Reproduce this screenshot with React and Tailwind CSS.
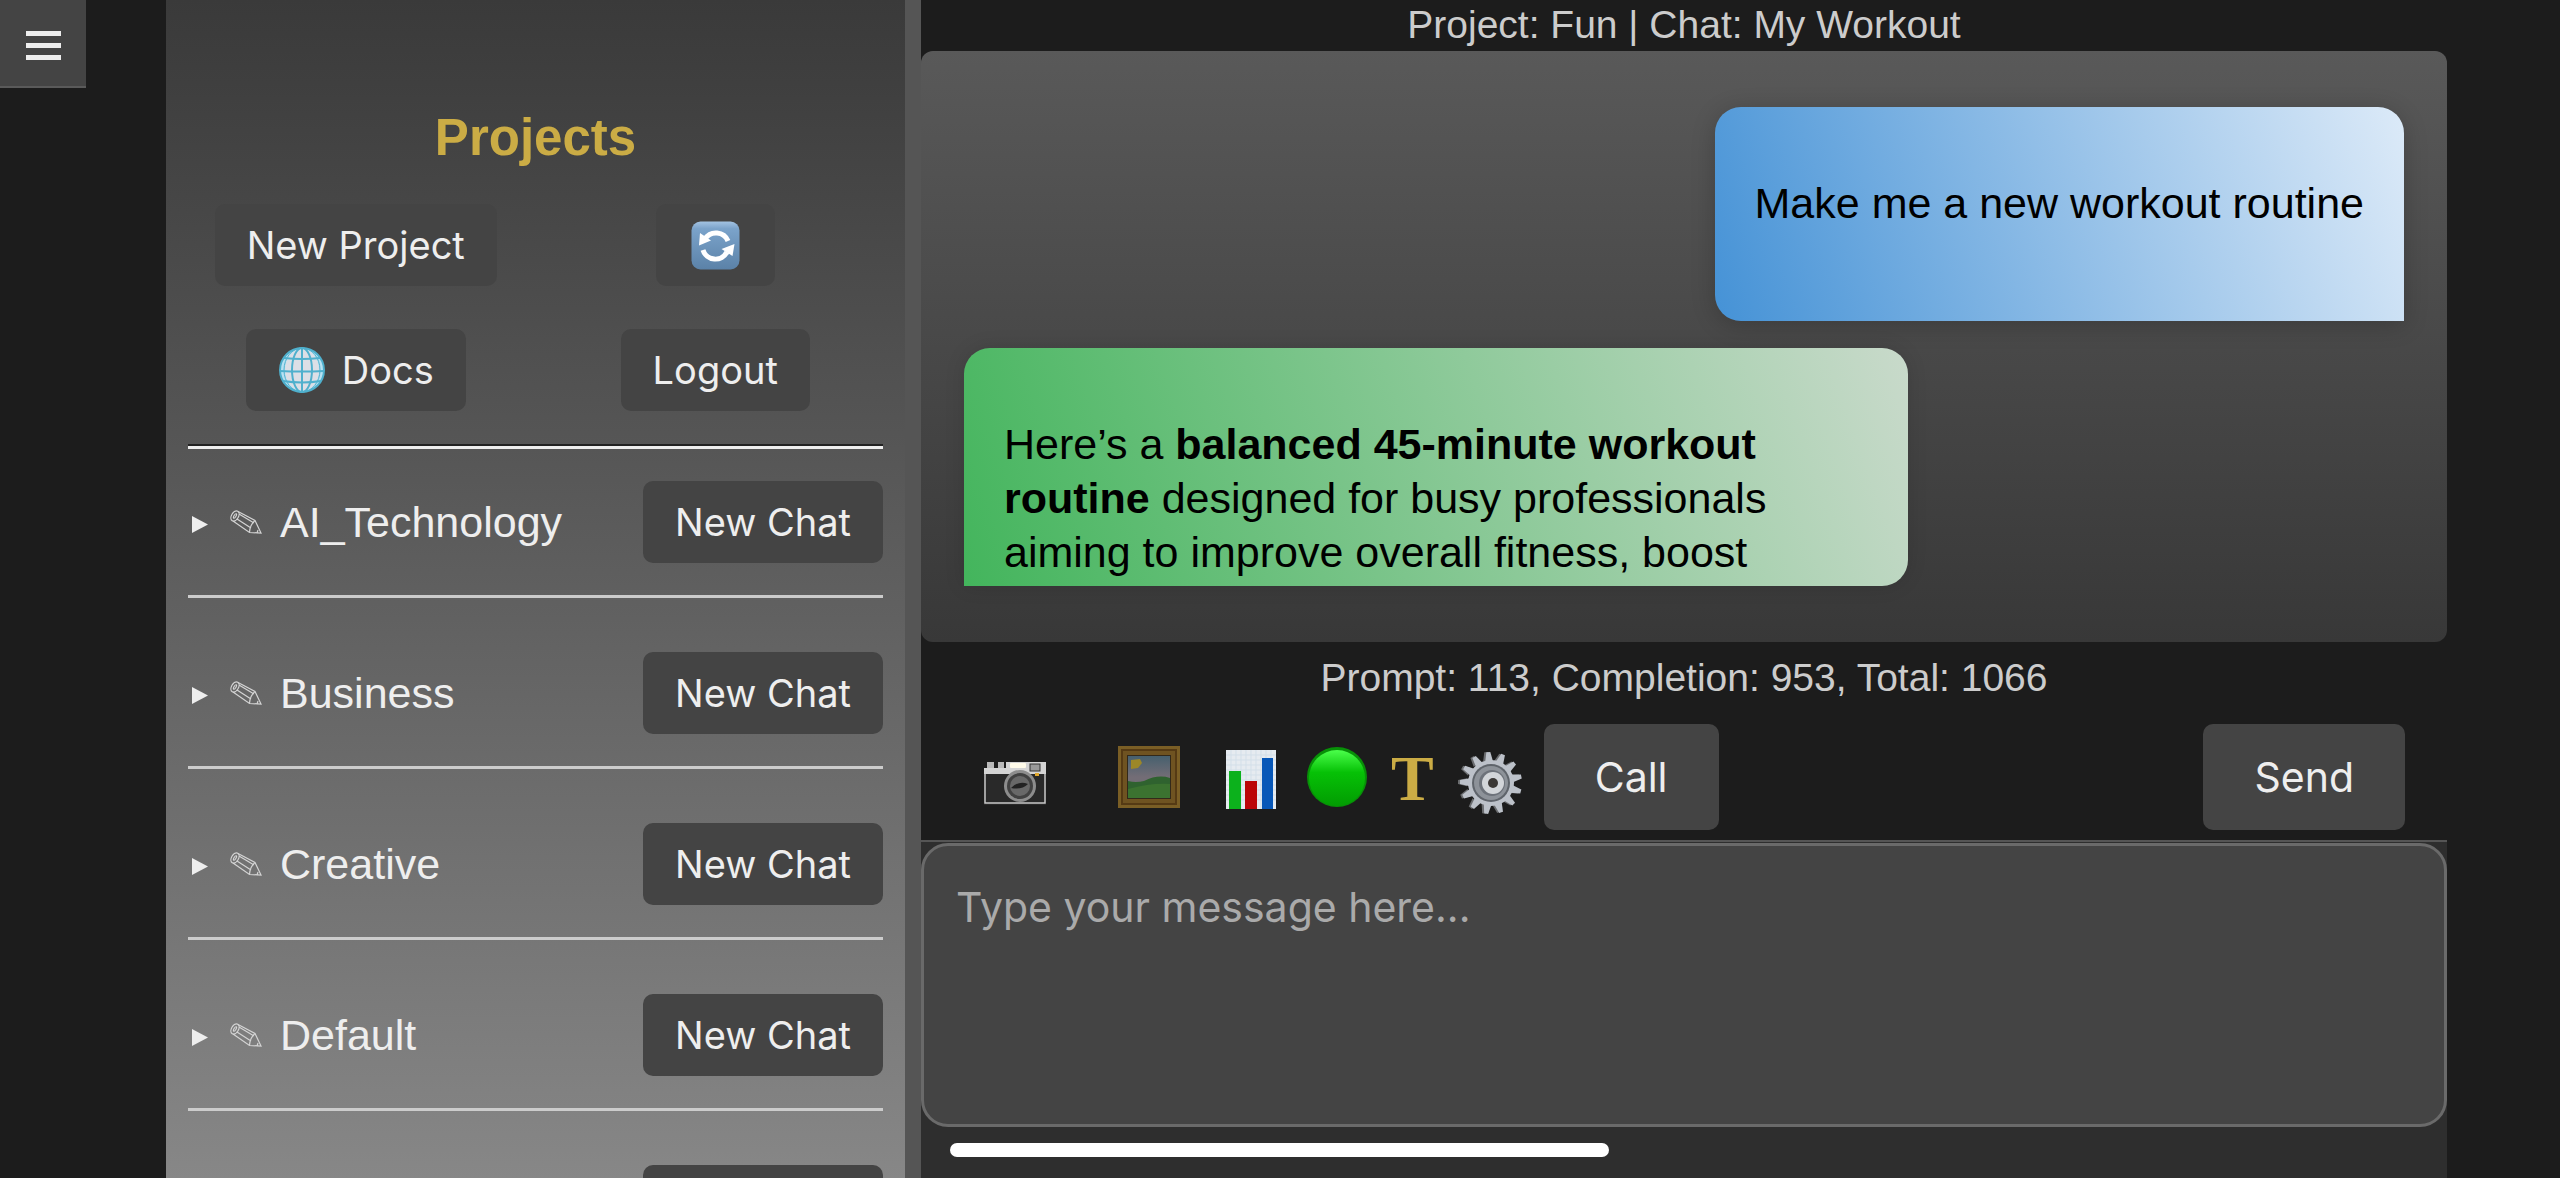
import React, { useState } from "react";

const projects = ["AI_Technology", "Business", "Creative", "Default", "Education"];

const RefreshIcon = () => (
  <svg viewBox="0 0 49 49" className="mx-[3px] size-[49px]" aria-hidden="true">
    <defs>
      <linearGradient id="refreshBg" x1="0" y1="0" x2="0" y2="1">
        <stop offset="0" stopColor="#a3c3e2" />
        <stop offset="0.15" stopColor="#7ba3ca" />
        <stop offset="1" stopColor="#5b82a8" />
      </linearGradient>
    </defs>
    <rect x="0.5" y="0.5" width="48" height="48" rx="9" fill="url(#refreshBg)" />
    <g fill="none" stroke="#fff" strokeWidth="5">
      <path d="M14 18a13 13 0 0 1 23 2" />
      <path d="M12 29a13 13 0 0 0 24 2" />
    </g>
    <path d="M8 24.500L9 12l11 7.500z" fill="#fff" />
    <path d="M43.500 23L30.500 28l11 7z" fill="#fff" />
  </svg>
);

const GlobeIcon = () => (
  <svg viewBox="0 0 48 48" className="size-12" aria-hidden="true">
    <circle cx="24" cy="24" r="22" fill="#b9e2f3" />
    <ellipse cx="24" cy="24" rx="17" ry="21" fill="#dcdfe6" />
    <g fill="none" stroke="#4fb0cd" strokeWidth="2">
      <circle cx="24" cy="24" r="22" />
      <ellipse cx="24" cy="24" rx="10" ry="22" />
      <ellipse cx="24" cy="24" rx="18" ry="22" strokeWidth="1" />
      <path d="M24 2v44M2 25q22 1 44 0M6 12q18 2 36 0M5 35q19 3 38 0" />
    </g>
  </svg>
);

const PencilIcon = () => (
  <svg
    viewBox="0 0 32 24"
    className="h-6 w-8"
    fill="none"
    stroke="#d4d4d4"
    strokeWidth="1.200"
    aria-hidden="true"
  >
    <path d="M8 1.500L25 10.500L31 23L19.500 22.500L3 11" />
    <ellipse cx="5" cy="6" rx="3.500" ry="5.500" transform="rotate(30 5 6)" />
    <ellipse cx="5" cy="6" rx="1" ry="2.500" transform="rotate(30 5 6)" />
    <path d="M9 4l15 9M7 9l14 9M25 10.500q-5 4-5.500 12M28 20l-1 3" />
  </svg>
);

const CameraIcon = () => (
  <svg viewBox="0 0 62 44" className="h-11 w-[62px]" aria-hidden="true">
    <path d="M3 1h7v6H3zM14 1h6v6h-6z" fill="#b9b9b9" />
    <path d="M0 7h22V1h40v12H0z" fill="#d4d4d4" />
    <path d="M0 13h62v31H0z" fill="#292929" />
    <path d="M1 13v29h60V13" fill="none" stroke="#c8c8c8" strokeWidth="1.500" />
    <rect x="26" y="2" width="16" height="5" rx="1" fill="#fffbe9" />
    <rect x="46" y="3" width="10" height="7" fill="#999" stroke="#333" />
    <rect x="51" y="12" width="4" height="3" fill="#e0a82e" />
    <circle cx="36" cy="25" r="16" fill="#8d8d8d" />
    <circle cx="36" cy="25" r="13" fill="#414141" />
    <circle cx="36" cy="25" r="10" fill="#686868" />
    <path d="M27 27q8-8 17-4q-6 6-17 4z" fill="#222" />
  </svg>
);

const FrameIcon = () => (
  <svg viewBox="0 0 62 62" className="size-[62px]" aria-hidden="true">
    <defs>
      <linearGradient id="frameSky" x1="0" y1="0" x2="0" y2="1">
        <stop offset="0" stopColor="#46606e" />
        <stop offset="0.5" stopColor="#736d76" />
      </linearGradient>
    </defs>
    <rect width="62" height="62" fill="#7a5e25" />
    <rect x="3" y="3" width="56" height="56" fill="#553a14" />
    <rect x="5" y="5" width="52" height="52" fill="#6f5321" />
    <rect x="9" y="9" width="44" height="44" fill="#33291a" />
    <rect x="10" y="10" width="42" height="42" fill="url(#frameSky)" />
    <path d="M13 14l9-1 2 4-4 5-7 1z" fill="#9c8728" />
    <path d="M10 35q8 2 16 0q14-7 26-3v20H10z" fill="#2f622f" />
    <path d="M10 43q22-6 42-5v14H10z" fill="#3b7230" />
  </svg>
);

const ChartIcon = () => (
  <svg viewBox="0 0 50 59" className="h-[59px] w-[50px]" aria-hidden="true">
    <rect width="50" height="59" fill="#e6ebf0" />
    <path
      d="M5 0v59M10 0v59M15 0v59M20 0v59M25 0v59M30 0v59M35 0v59M40 0v59M45 0v59M0 5h50M0 10h50M0 15h50M0 20h50M0 25h50M0 30h50M0 35h50M0 40h50M0 45h50M0 50h50"
      stroke="#d3dfe9"
    />
    <rect x="3" y="21" width="12" height="38" fill="#0cb11c" />
    <rect x="19" y="31" width="12" height="28" fill="#bb0507" />
    <rect x="36" y="8" width="11" height="51" fill="#0757b8" />
  </svg>
);

const StatusIcon = () => (
  <svg viewBox="0 0 60 60" className="size-[60px]" aria-hidden="true">
    <defs>
      <linearGradient id="statusShine" x1="0" y1="0" x2="0" y2="1">
        <stop offset="0" stopColor="#4bff4b" />
        <stop offset="0.4" stopColor="#06c106" />
        <stop offset="1" stopColor="#029c02" />
      </linearGradient>
    </defs>
    <circle cx="30" cy="30" r="30" fill="#079107" />
    <ellipse cx="30" cy="31" rx="28" ry="28" fill="url(#statusShine)" />
  </svg>
);

const teeth = [0, 28, 55, 83, 111, 138, 166, 194, 222, 249, 277, 305, 332];

const GearIcon = () => (
  <svg viewBox="0 0 64 64" className="size-16" aria-hidden="true">
    <g fill="#6b6d70">
      {teeth.map((a) => (
        <path key={a} d="M27 10l2-9h4l2 9z" transform={`rotate(${a - 5} 31 32)`} />
      ))}
    </g>
    <g fill="#bcc1c9">
      {teeth.map((a) => (
        <path key={a} d="M29 11l2-10h4l2 10z" transform={`rotate(${a - 5} 33 32)`} />
      ))}
      <circle cx="33" cy="32" r="23" />
    </g>
    <circle cx="33" cy="32" r="19" fill="#5f646b" />
    <circle cx="33" cy="32" r="17" fill="#8d9299" />
    <circle cx="34" cy="32" r="13" fill="#6d727a" />
    <circle cx="35" cy="32" r="11" fill="#d2d5d9" />
    <circle cx="35" cy="32" r="5" fill="#3b3836" />
  </svg>
);

const SidebarButton = ({ children, ...props }) => (
  <button
    className="flex h-[82px] items-center justify-center rounded-[10px] bg-[#444] px-8 font-[Inter,sans-serif] text-[38px] leading-[46px] text-[#eee]"
    {...props}
  >
    {children}
  </button>
);

const Sidebar = () => (
  <aside className="flex w-[739px] shrink-0 flex-col overflow-hidden bg-linear-to-b from-[#3a3a3a] to-[#878787]">
    <h1 className="pt-[108px] text-center text-[51px] leading-[60px] font-bold text-[#cbac45]">
      Projects
    </h1>
    <div className="grid grid-cols-2 justify-items-center gap-y-[43px] px-[10px] pt-9">
      <SidebarButton>New Project</SidebarButton>
      <SidebarButton aria-label="Refresh">
        <RefreshIcon />
      </SidebarButton>
      <SidebarButton>
        <GlobeIcon />
        <span className="ml-4">Docs</span>
      </SidebarButton>
      <SidebarButton>Logout</SidebarButton>
    </div>
    <hr className="mx-[22px] mt-[33px] border-t-2 border-b-3 border-t-[#222] border-b-[#eee]" />
    <ul className="mx-[22px] -mt-[22px]">
      {projects.map((name) => (
        <li
          key={name}
          className="flex items-center border-b-3 border-[#ccc] pt-[54px] pb-8"
        >
          <button aria-label={`Expand ${name}`} className="mt-1 ml-1">
            <svg viewBox="0 0 16 17" className="h-[17px] w-4" fill="#eee">
              <path d="M0 0l16 8.500L0 17z" />
            </svg>
          </button>
          <button aria-label={`Rename ${name}`} className="ml-[22px]">
            <PencilIcon />
          </button>
          <span className="ml-[18px] grow text-[43px] leading-[54px] text-[#eee]">
            {name}
          </span>
          <SidebarButton>New Chat</SidebarButton>
        </li>
      ))}
    </ul>
  </aside>
);

const ChatLog = () => (
  <div className="flex h-[591px] shrink-0 flex-col gap-[27px] rounded-xl bg-linear-to-b from-[#595959] to-[#383838] px-[43px] pt-14 text-[43px] leading-[54px] text-black">
    <div className="h-[214px] self-end rounded-[26px] rounded-br-none bg-linear-[70deg,#4592d6,#dceaf8] px-10 pt-[69px] shadow-[0_4px_24px_rgba(0,0,0,0.2)]">
      <p>Make me a new workout routine</p>
    </div>
    <div className="h-[238px] w-[944px] max-w-full overflow-hidden rounded-[26px] rounded-bl-none bg-linear-[70deg,#43b55c,#c9dacb] px-10 pt-[69px] shadow-[0_0_20px_rgba(0,0,0,0.12)]">
      <p>
        Here’s a <strong>balanced 45-minute workout routine</strong> designed
        for busy professionals aiming to improve overall fitness, boost
      </p>
    </div>
  </div>
);

const ActionButton = ({ children, ...props }) => (
  <button
    className="h-[106px] rounded-[10px] bg-[#444] px-[51px] font-[Inter,sans-serif] text-[41px] leading-[54px] text-[#eee]"
    {...props}
  >
    {children}
  </button>
);

const Toolbar = () => (
  <div className="flex h-[118px] shrink-0 items-start border-b-2 border-[#555] pr-[42px] pl-[63px]">
    <div className="flex h-[106px] items-center">
      <button aria-label="Take photo" className="mt-3">
        <CameraIcon />
      </button>
      <button aria-label="Choose image" className="ml-[72px]">
        <FrameIcon />
      </button>
      <button aria-label="Usage chart" className="mt-1 ml-[46px]">
        <ChartIcon />
      </button>
      <button aria-label="Status" className="ml-[31px]">
        <StatusIcon />
      </button>
      <button
        aria-label="Text size"
        className="mt-1 ml-6 font-['Liberation_Serif',serif] text-[64px] leading-[72px] font-bold text-[#cbac45]"
      >
        T
      </button>
      <button aria-label="Settings" className="mt-3 ml-6">
        <GearIcon />
      </button>
    </div>
    <div className="ml-[22px] flex grow justify-between">
      <ActionButton>Call</ActionButton>
      <ActionButton>Send</ActionButton>
    </div>
  </div>
);

const App = () => {
  const [message, setMessage] = useState("");

  return (
    <div className="flex h-screen overflow-hidden bg-[#1c1c1c] font-['Liberation_Sans',Arial,sans-serif]">
      {/* Menu toggle */}
      <div className="w-[166px] shrink-0">
        <button
          aria-label="Menu"
          className="flex h-[88px] w-[86px] flex-col items-center justify-center gap-[7px] border-b-2 border-[#5a5a5a] bg-[#444] pt-1"
        >
          <span className="h-[5px] w-[35px] bg-[#eee]" />
          <span className="h-[5px] w-[35px] bg-[#eee]" />
          <span className="h-[5px] w-[35px] bg-[#eee]" />
        </button>
      </div>

      <Sidebar />
      <div className="w-4 shrink-0 bg-[#555]" />

      {/* Chat area */}
      <main className="mr-[113px] flex min-w-0 grow flex-col">
        <p className="h-[51px] shrink-0 text-center text-[39px] leading-[50px] text-[#ccc]">
          Project: Fun | Chat: My Workout
        </p>
        <ChatLog />
        <p className="h-[82px] shrink-0 pt-[11px] text-center text-[39px] leading-[50px] text-[#ccc]">
          Prompt: 113, Completion: 953, Total: 1066
        </p>
        <Toolbar />
        <div className="flex min-h-0 grow flex-col bg-[#2e2e2e] pt-px">
          <textarea
            aria-label="Message"
            value={message}
            onChange={(e) => setMessage(e.target.value)}
            placeholder="Type your message here..."
            className="h-[284px] w-full shrink-0 resize-none rounded-[27px] border-3 border-[#6a6a6a] bg-[#444] px-8 pt-9 font-[Inter,sans-serif] text-[41px] leading-[50px] text-[#eee] placeholder:text-[#aaa]"
          />
          <div className="mt-4 ml-[29px] h-[14px] w-[659px] rounded-full bg-white" />
        </div>
      </main>
    </div>
  );
};

export default App;
